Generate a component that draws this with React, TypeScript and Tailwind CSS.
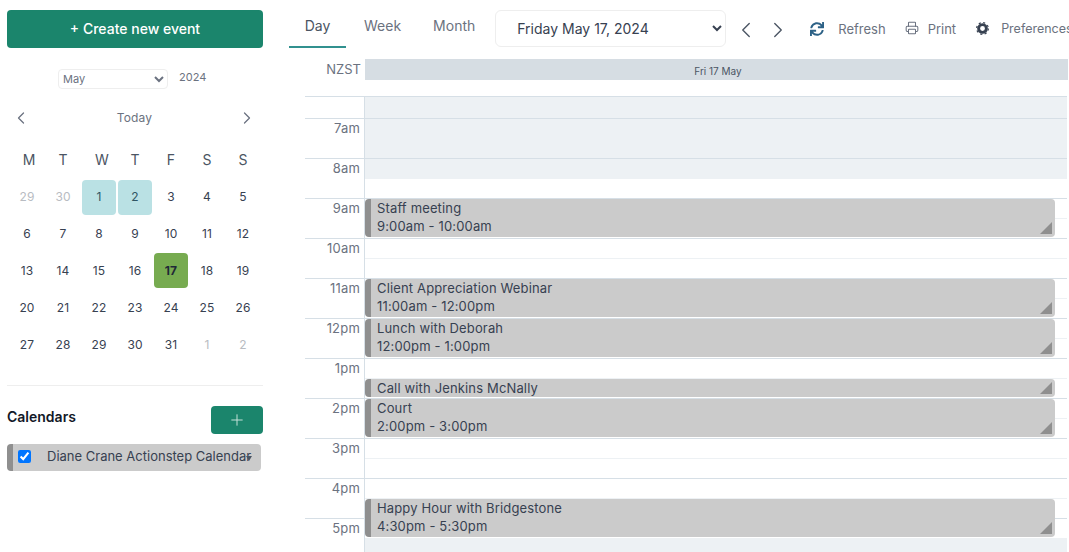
import React from 'react';
import { ChevronLeft, ChevronRight, Printer, Plus } from 'lucide-react';
import { FaSync } from 'react-icons/fa';

const days = [
    ['29', '30', '1', '2', '3', '4', '5'],
    ['6', '7', '8', '9', '10', '11', '12'],
    ['13', '14', '15', '16', '17', '18', '19'],
    ['20', '21', '22', '23', '24', '25', '26'],
    ['27', '28', '29', '30', '31', '1', '2'],
];

const weekdays = [
    { label: 'M', cls: 'pl-1' },
    { label: 'T', cls: '' },
    { label: 'W', cls: 'pl-[6px]' },
    { label: 'T', cls: '' },
    { label: 'F', cls: '' },
    { label: 'S', cls: '' },
    { label: 'S', cls: '' },
];

const hours = ['', '7am', '8am', '9am', '10am', '11am', '12pm', '1pm', '2pm', '3pm', '4pm', '5pm'];

const events = [
    { title: 'Staff meeting', time: '9:00am - 10:00am', cls: 'top-[102px] h-[38px]' },
    { title: 'Client Appreciation Webinar', time: '11:00am - 12:00pm', cls: 'top-[182px] h-[38px]' },
    { title: 'Lunch with Deborah', time: '12:00pm - 1:00pm', cls: 'top-[222px] h-[38px]' },
    { title: 'Call with Jenkins McNally', time: '', cls: 'top-[282px] h-[18px]' },
    { title: 'Court', time: '2:00pm - 3:00pm', cls: 'top-[302px] h-[38px]' },
    { title: 'Happy Hour with Bridgestone', time: '4:30pm - 5:30pm', cls: 'top-[402px] h-[38px]' },
];

function Sidebar() {
    return (
        <div className="w-[256px] ml-[7px] shrink-0 pt-[10px]">
            <button className="w-full h-[38px] bg-[#1b856c] rounded text-white text-sm font-medium">
                + Create new event
            </button>
            <div className="flex items-center mt-[21px] ml-[51px]">
                <select defaultValue="May" className="w-[110px] h-5 border border-[#eeeeee] rounded text-[11px] text-[#6b7280] bg-white">
                    <option>May</option>
                </select>
                <span className="ml-[11px] text-[11px] text-[#6b7280] -mt-[3px]">2024</span>
            </div>
            <div className="flex items-center justify-between h-5 mt-[19px] pl-[4px] pr-[6px] text-[#6b7280]">
                <ChevronLeft className="w-5 h-5" strokeWidth={1.5} />
                <span className="text-xs tracking-[0.2px] ml-px">Today</span>
                <ChevronRight className="w-5 h-5" strokeWidth={1.5} />
            </div>
            <div className="grid grid-cols-7 w-[252px] ml-[2px] mt-[22px] text-[#4b5563] text-sm text-center">
                {weekdays.map((d, i) => (
                    <div key={i} className={`h-[20px] leading-5 ${d.cls}`}>{d.label}</div>
                ))}
            </div>
            <div className="grid grid-cols-7 w-[252px] ml-[2px] mt-[9px] text-xs text-center tracking-[0.1px]">
                {days.map((row, r) =>
                    row.map((d, c) => {
                        const muted = (r === 0 && c < 2) || (r === 4 && c > 4);
                        const picked = r === 0 && (c === 2 || c === 3);
                        const today = d === '17';
                        return (
                            <div key={`${r}-${c}`} className="h-[36.8px] flex items-center justify-center">
                                <div
                                    className={`w-[34px] h-[35px] rounded flex items-center justify-center ${
                                        today ? 'bg-[#77ab50] font-bold text-[#1f2937]' : picked ? 'bg-[#bae1e4] text-[#2f5563]' : muted ? 'text-[#b8bcc2]' : 'text-[#374151]'
                                    }`}
                                >
                                    {d}
                                </div>
                            </div>
                        );
                    })
                )}
            </div>
            <div className="border-t border-[#eeeeee] mt-[22px] flex items-start justify-between pt-[20px]">
                <span className="text-sm font-semibold text-[#111827] leading-[22px]">Calendars</span>
                <button className="w-[52px] h-7 bg-[#1b856c] rounded flex items-center justify-center text-[#cfe6df]">
                    <Plus className="w-[18px] h-[18px]" strokeWidth={1.25} />
                </button>
            </div>
            <div className="relative w-[254px] h-[27px] mt-[10px] pb-[2px] bg-[#cbcbcb] rounded border-l-[6px] border-[#8f8f8f] flex items-center text-[13px] text-[#374151]">
                <input type="checkbox" defaultChecked className="ml-[5px] w-[13px] h-[13px] accent-[#0075ff]" />
                <span className="ml-4 whitespace-nowrap">Diane Crane Actionstep Calendar</span>
                <span className="absolute right-[9px] top-[12px] w-0 h-0 border-x-[3px] border-t-[5px] border-x-transparent border-t-[#4b5563]" />
            </div>
        </div>
    );
}

function GearIcon() {
    return (
        <svg viewBox="0 0 16 16" className="ml-[20px] mt-[22px] w-[13px] h-[13px] shrink-0 text-[#374151]" fill="none" stroke="currentColor">
            <circle cx="8" cy="8" r="4.8" strokeWidth="3.6" />
            <circle cx="8" cy="8" r="7.2" strokeWidth="1.4" strokeDasharray="2.6 3.05" />
        </svg>
    );
}

function Toolbar() {
    return (
        <div className="flex items-start h-[59px] text-[#6b7280] whitespace-nowrap">
            <div className="w-[57px] shrink-0 h-[38px] mt-[10px] flex justify-center pt-[6px] text-sm border-b-2 border-[#31918f] text-[#4b5563]">Day</div>
            <div className="ml-[18px] shrink-0 mt-[16px] text-sm">Week</div>
            <div className="ml-[32px] shrink-0 mt-[16px] text-sm">Month</div>
            <select defaultValue="d" className="ml-[20px] shrink-0 mt-[10px] w-[231px] h-[37px] border border-[#eeeeee] rounded-md pl-[17px] text-sm text-[#374151] bg-white">
                <option value="d">Friday May 17, 2024</option>
            </select>
            <ChevronLeft className="ml-[7px] mt-[17px] w-[26px] h-[26px] shrink-0 text-[#4b5563]" strokeWidth={1.25} />
            <ChevronRight className="ml-[6px] mt-[17px] w-[26px] h-[26px] shrink-0 text-[#4b5563]" strokeWidth={1.25} />
            <FaSync className="ml-[19px] mt-[22px] w-[14px] h-[14px] shrink-0 text-[#2c6186]" />
            <span className="ml-[14px] shrink-0 mt-[20px] text-[13px] leading-[18px]">Refresh</span>
            <Printer className="ml-[19px] mt-[21px] w-[14px] h-[14px] shrink-0" strokeWidth={1.75} />
            <span className="ml-[9px] shrink-0 mt-[20px] text-[13px] leading-[18px]">Print</span>
            <GearIcon />
            <span className="ml-[12px] shrink-0 mt-[20px] text-[12.5px] leading-[18px]">Preferences</span>
        </div>
    );
}

function DayGrid() {
    return (
        <div className="flex flex-col w-[764px] ml-[16px]">
            <div className="flex h-[37px]">
                <div className="w-[60px] text-[13px] text-[#6b7280] text-right pr-[4px] pt-px leading-[18px]">NZST</div>
                <div className="w-[703px] h-[21px] bg-[#d6dde3] text-[10px] text-[#4b5563] text-center leading-[24px] pl-[3px]">Fri 17 May</div>
            </div>
            <div className="flex border-t border-[#d6dfe6] h-[456px] mr-[2px]">
                <div className="w-[59px] shrink-0">
                    {hours.map((h, i) => (
                        <div key={i} className={`${i === 0 ? 'h-[21px]' : 'h-[40px] border-t border-[#d6dfe6]'} text-[13px] tracking-[0.2px] text-[#6b7280] text-right pr-1 leading-[18px]`}>
                            {h}
                        </div>
                    ))}
                </div>
                <div className="relative flex-1 border-l border-[#d6dfe6] bg-white overflow-hidden">
                    <div className="h-[82px] bg-[#edf1f4]" />
                    <div className="absolute inset-x-0 top-[441px] h-[20px] bg-[#edf1f4]" />
                    {[22, 62, 102, 142, 182, 222, 262, 302, 342, 382, 422].map((t) => (
                        <div key={t} className="absolute inset-x-0 h-px bg-[#d6dfe6]" style={{ top: t - 1 }} />
                    ))}
                    {[42, 122, 162, 202, 242, 282, 322, 362, 402].map((t) => (
                        <div key={t} className="absolute inset-x-0 h-px bg-[#edf1f4]" style={{ top: t - 1 }} />
                    ))}
                    {events.map((e) => (
                        <div key={e.title} className={`absolute left-0 w-[690px] ${e.cls} bg-[#cbcbcb] rounded border-l-[6px] border-[#8f8f8f] pl-[6px] text-[13px] leading-[18px] tracking-[0.15px] text-[#374151] overflow-hidden`}>
                            <div>{e.title}</div>
                            {e.time && <div>{e.time}</div>}
                            <span className="absolute right-[3px] bottom-[3px] w-0 h-0 border-l-[12px] border-b-[12px] border-l-transparent border-b-[#8f8f8f]" />
                        </div>
                    ))}
                </div>
            </div>
        </div>
    );
}

export default function App() {
    return (
        <div className="flex w-[1069px] h-[552px] overflow-hidden bg-white" style={{ fontFamily: 'Inter, sans-serif' }}>
            <Sidebar />
            <div className="flex-1 min-w-0 ml-[26px] overflow-hidden">
                <Toolbar />
                <DayGrid />
            </div>
        </div>
    );
}
